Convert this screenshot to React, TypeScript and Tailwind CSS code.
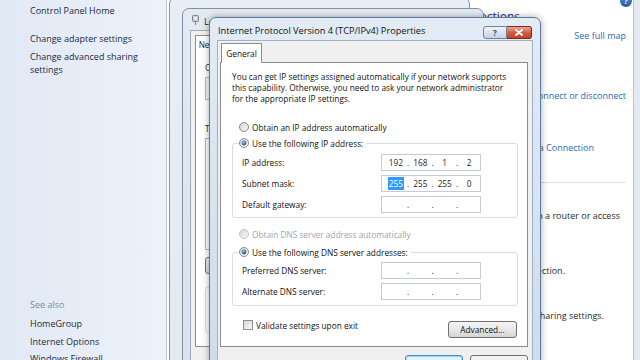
import React from "react";

function Radio({ checked = false, disabled = false }: { checked?: boolean; disabled?: boolean }) {
  return (
    <svg width="10" height="10" viewBox="0 0 10 10" className="shrink-0">
      <defs>
        <linearGradient id="rbg" x1="0" y1="0" x2="1" y2="1">
          <stop offset="0" stopColor="#d4d4d4" />
          <stop offset="1" stopColor="#fbfbfb" />
        </linearGradient>
        <radialGradient id="rdot" cx="0.4" cy="0.35" r="0.75">
          <stop offset="0" stopColor="#b8d4ef" />
          <stop offset="0.45" stopColor="#4a7db1" />
          <stop offset="1" stopColor="#1d4673" />
        </radialGradient>
      </defs>
      <circle cx="5" cy="5" r="4.5" fill="url(#rbg)" stroke={disabled ? "#c6c6c6" : "#8a8a8a"} strokeWidth="1" />
      {checked && <circle cx="5" cy="5" r="2.4" fill="url(#rdot)" />}
    </svg>
  );
}

function Checkbox() {
  return (
    <span className="h-[10px] w-[10px] shrink-0 border border-[#8e8f8f] bg-linear-to-br from-[#d8d8d8] to-[#fafafa]" />
  );
}

function IpBox({ parts, highlight = false }: { parts: string[]; highlight?: boolean }) {
  return (
    <div className="flex h-[17px] w-[100px] items-center border border-[#c4cbd4] bg-white pl-[3px] text-[8.3px] leading-[11px] text-[#1e1e1e]">
      {parts.map((p, i) => (
        <React.Fragment key={i}>
          <span className="flex w-[22px] justify-center">
            {highlight && i === 0 ? (
              <span className="bg-[#3399ff] px-[1px] leading-[13px] text-white">{p}</span>
            ) : (
              p
            )}
          </span>
          {i < 3 && <span className="w-[3px] text-center">.</span>}
        </React.Fragment>
      ))}
    </div>
  );
}

function IpRow({ label, parts, highlight = false }: { label: string; parts: string[]; highlight?: boolean }) {
  return (
    <div className="flex h-[17px] items-center">
      <span className="w-[139px]">{label}</span>
      <IpBox parts={parts} highlight={highlight} />
    </div>
  );
}

const EMPTY = ["", "", "", ""];

function LeftPanel() {
  return (
    <div className="flex w-[167px] shrink-0 flex-col border-r border-[#b9c5d3] bg-linear-to-r from-[#e1e9f5] to-[#edf2f9] pl-[30px] pt-[4px] text-[9px] leading-[13px] text-[#1b2b42]">
      <span>Control Panel Home</span>
      <span className="mt-[15px]">Change adapter settings</span>
      <span className="mt-[5px] w-[122px]">Change advanced sharing settings</span>
      <span className="mt-[222px] text-[#7d8a9b]">See also</span>
      <span className="mt-[6px]">HomeGroup</span>
      <span className="mt-[5px]">Internet Options</span>
      <span className="mt-[4px]">Windows Firewall</span>
    </div>
  );
}

function MainContent() {
  return (
    <div className="relative min-w-0 flex-1 overflow-hidden bg-white">
      <div className="flex flex-col pr-[7px] text-[9px] leading-[12px] whitespace-nowrap">
        <div className="mt-[9px] flex h-[16px] justify-end pr-[106px] text-[12px] leading-[16px] text-[#1e3287]">
          <span>View your basic network information and set up connections</span>
        </div>
        <div className="mt-[5px] flex justify-end text-[#2a69b3]">
          <span>See full map</span>
        </div>
        <div className="mt-[48px] flex justify-end text-[#2a69b3]">
          <span>Connect or disconnect</span>
        </div>
        <div className="mt-[40px] flex justify-end pr-[32px] text-[#2a69b3]">
          <span>Local Area Connection</span>
        </div>
        <div className="ml-[250px] mt-[28px] h-px bg-[#d9dfe6]" />
        <div className="mt-[27px] flex justify-end pr-[6px] text-[#2b2b2b]">
          <span>Set up a wireless, broadband, dial-up, ad hoc, or VPN connection; or set up a router or access</span>
        </div>
        <div className="mt-[43px] flex justify-end pr-[61px] text-[#2b2b2b]">
          <span>Connect or reconnect to a wireless, wired, dial-up, or VPN network connection.</span>
        </div>
        <div className="mt-[33px] flex justify-end pr-[22px] text-[#2b2b2b]">
          <span>Access files and printers located on other network computers, or change sharing settings.</span>
        </div>
      </div>
      <div className="absolute right-[1px] top-[-5px] flex h-[12px] w-[12px] items-center justify-center rounded-full bg-linear-to-b from-[#5d93d6] to-[#1f5aa8] text-[8px] font-bold leading-none text-white">
        ?
      </div>
    </div>
  );
}

function AdapterIcon() {
  return (
    <svg width="7" height="10" viewBox="0 0 7 10" className="shrink-0">
      <rect x="0.5" y="0.5" width="6" height="6" rx="1" fill="#c9ced4" stroke="#7d8590" />
      <rect x="2" y="2" width="3" height="2.5" fill="#eef1f4" />
      <rect x="3" y="6.5" width="1" height="3.5" fill="#7d8590" />
    </svg>
  );
}

function WindowA() {
  return (
    <div className="absolute isolate left-[169px] top-[-3px] h-[380px] w-[301px] rounded-t-[7px] border border-[#8493a6] bg-linear-to-b from-[#e8eef5] to-[#e2e9f1]" />
  );
}

function WindowB() {
  return (
    <div className="absolute isolate left-[182px] top-[8px] flex h-[380px] w-[302px] flex-col rounded-t-[7px] border border-[#8190a4] bg-linear-to-b from-[#e3eaf3] to-[#d9e2ed] text-[#1e1e1e]">
      <div className="flex h-[21px] items-center gap-[5px] pl-[9px]">
        <AdapterIcon />
        <span className="mt-[4px] text-[9.3px] leading-[12px]">Local Area Connection Properties</span>
      </div>
      <div className="mx-[7px] flex flex-1 flex-col border border-[#a0adbb] bg-[#f0f0f0] px-[4px] pt-[4px]">
        <div className="relative z-10 -mb-px flex h-[19px] w-[52px] items-center justify-center border border-b-0 border-[#898c95] bg-white text-[8.3px]">
          Networking
        </div>
        <div className="flex h-[294px] flex-col border border-[#898c95] bg-white px-[9px] pt-[8px] text-[8.3px] leading-[11px]">
          <span>Connect using:</span>
          <div className="mt-[4px] h-[23px] border border-[#b5bcc5] bg-[#f6f6f6]" />
          <span className="mt-[23px]">This connection uses the following items:</span>
          <div className="mt-[4px] h-[112px] border border-[#abb3bd] bg-white" />
          <div className="mt-[7px] h-[17px] w-[60px] rounded-[3px] border border-[#707070] bg-linear-to-b from-[#f3f3f3] to-[#d6d6d6]" />
          <div className="mt-[13px] h-[46px] rounded-[3px] border border-[#d5dce4]" />
        </div>
      </div>
    </div>
  );
}

function Dialog() {
  return (
    <div className="absolute isolate left-[209px] top-[17px] flex h-[380px] w-[332px] flex-col rounded-t-[7px] border border-[#5d7b9e] bg-linear-to-b from-[#e3ebf5] via-[#d8e3f0] to-[#cddaea] text-[#111] shadow-[0_0_7px_rgba(0,0,0,0.35)]">
      <div className="flex h-[22px] items-start justify-between px-[8px]">
        <span className="mt-[7px] text-[9.2px] leading-[12px]">Internet Protocol Version 4 (TCP/IPv4) Properties</span>
        <div className="mt-[8px] flex">
          <div className="flex h-[13px] w-[24px] items-center justify-center rounded-l-[3px] border border-[#73849a] bg-linear-to-b from-[#f1f4f8] via-[#dbe3ec] to-[#c6d2e0] text-[8px] font-bold leading-none text-[#3d4b5c]">
            ?
          </div>
          <div className="flex h-[13px] w-[25px] items-center justify-center rounded-r-[3px] border border-l-0 border-[#7b2b1f] bg-linear-to-b from-[#e9a898] via-[#d35c43] to-[#c2412a]">
            <svg width="8" height="7" viewBox="0 0 8 7">
              <path d="M1 1 L7 6 M7 1 L1 6" stroke="#ffffff" strokeWidth="1.8" strokeLinecap="round" />
            </svg>
          </div>
        </div>
      </div>
      <div className="mx-[7px] flex flex-1 flex-col border border-[#9fb0c4] bg-[#f0f0f0] pl-[2px] pr-[4px] pt-[2px] text-[8.3px] leading-[11px]">
        <div className="relative z-10 -mb-px ml-[1px] flex h-[20px] w-[41px] items-center justify-center border border-b-0 border-[#898c95] bg-white">
          General
        </div>
        <div className="flex h-[285px] w-[308px] flex-col border border-[#898c95] bg-white pl-[11px] pt-[8px]">
          <p>
            You can get IP settings assigned automatically if your network supports
            <br />
            this capability. Otherwise, you need to ask your network administrator
            <br />
            for the appropriate IP settings.
          </p>
          <div className="ml-[7px] mt-[17px] flex h-[12px] items-center gap-[3px]">
            <Radio />
            <span>Obtain an IP address automatically</span>
          </div>
          <fieldset className="mt-[4px] w-[286px] rounded-[3px] border border-[#d5dce4] pb-[4px] pt-[5px]">
            <legend className="ml-[6px] pr-[3px]">
              <span className="flex h-[12px] items-center gap-[3px]">
                <Radio checked />
                <span>Use the following IP address:</span>
              </span>
            </legend>
            <div className="flex flex-col gap-[4px] pl-[9px]">
              <IpRow label="IP address:" parts={["192", "168", "1", "2"]} />
              <IpRow label="Subnet mask:" parts={["255", "255", "255", "0"]} highlight />
              <IpRow label="Default gateway:" parts={EMPTY} />
            </div>
          </fieldset>
          <div className="ml-[7px] mt-[10px] flex h-[12px] items-center gap-[3px] text-[#a3a3a3]">
            <Radio disabled />
            <span>Obtain DNS server address automatically</span>
          </div>
          <fieldset className="mt-[6px] w-[286px] rounded-[3px] border border-[#d5dce4] pb-[5px] pt-[4px]">
            <legend className="ml-[6px] pr-[3px]">
              <span className="flex h-[12px] items-center gap-[3px]">
                <Radio checked />
                <span>Use the following DNS server addresses:</span>
              </span>
            </legend>
            <div className="flex flex-col gap-[4px] pl-[9px]">
              <IpRow label="Preferred DNS server:" parts={EMPTY} />
              <IpRow label="Alternate DNS server:" parts={EMPTY} />
            </div>
          </fieldset>
          <div className="mt-[13px] flex w-[286px] items-start justify-between">
            <div className="ml-[11px] flex h-[12px] items-center gap-[3px]">
              <Checkbox />
              <span>Validate settings upon exit</span>
            </div>
            <div className="mr-[1px] mt-[2px] flex h-[17px] w-[69px] items-center justify-center rounded-[3px] border border-[#707070] bg-linear-to-b from-[#f4f4f4] via-[#e8e8e8] to-[#d4d4d4]">
              Advanced...
            </div>
          </div>
        </div>
        <div className="mt-[8px] flex justify-end gap-[7px]">
          <div className="flex h-[24px] w-[58px] items-center justify-center rounded-[3px] border border-[#3d8fd0] bg-linear-to-b from-[#eaf5fc] to-[#c6e2f6] shadow-[inset_0_0_0_1px_#9ed4f5]">
            OK
          </div>
          <div className="flex h-[24px] w-[58px] items-center justify-center rounded-[3px] border border-[#707070] bg-linear-to-b from-[#f4f4f4] to-[#d6d6d6]">
            Cancel
          </div>
        </div>
      </div>
    </div>
  );
}

export default function App() {
  return (
    <div className="relative flex h-[360px] w-[640px] overflow-hidden bg-white font-['Open_Sans',sans-serif]">
      <LeftPanel />
      <MainContent />
      <div className="w-[7px] shrink-0 border-l border-[#b9c4d1] bg-[#e4eaf1]" />
      <WindowA />
      <WindowB />
      <Dialog />
    </div>
  );
}
